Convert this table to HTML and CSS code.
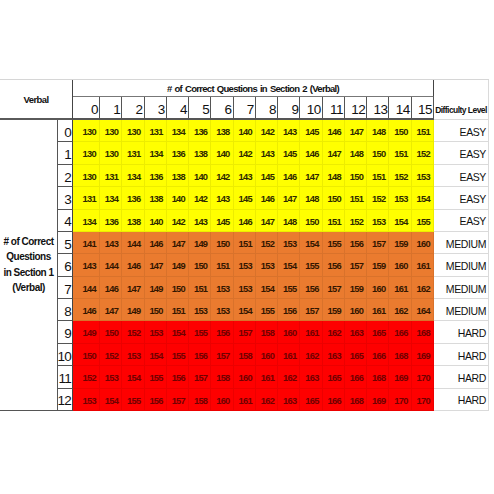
FILE: index.html
```html
<!DOCTYPE html>
<html>
<head>
<meta charset="utf-8">
<link rel="stylesheet" href="styles.css">
</head>
<body>
<div class="sheet">
  <div class="corner">Verbal</div>
  <div class="title"># of Correct Questions in Section 2 (Verbal)</div>
  <div class="dhead">Difficulty Level</div>
  <div class="cn">0</div><div class="cn">1</div><div class="cn">2</div><div class="cn">3</div><div class="cn">4</div><div class="cn">5</div><div class="cn">6</div><div class="cn">7</div><div class="cn">8</div><div class="cn">9</div><div class="cn">10</div><div class="cn">11</div><div class="cn">12</div><div class="cn">13</div><div class="cn">14</div><div class="cn">15</div>
  <div class="side"># of Correct<br>Questions<br>in Section 1<br>(Verbal)</div>

  <div class="rn">0</div>
  <div class="c y">130</div><div class="c y">130</div><div class="c y">130</div><div class="c y">131</div><div class="c y">134</div><div class="c y">136</div><div class="c y">138</div><div class="c y">140</div><div class="c y">142</div><div class="c y">143</div><div class="c y">145</div><div class="c y">146</div><div class="c y">147</div><div class="c y">148</div><div class="c y">150</div><div class="c y">151</div>
  <div class="d">EASY</div>

  <div class="rn">1</div>
  <div class="c y">130</div><div class="c y">130</div><div class="c y">131</div><div class="c y">134</div><div class="c y">136</div><div class="c y">138</div><div class="c y">140</div><div class="c y">142</div><div class="c y">143</div><div class="c y">145</div><div class="c y">146</div><div class="c y">147</div><div class="c y">148</div><div class="c y">150</div><div class="c y">151</div><div class="c y">152</div>
  <div class="d">EASY</div>

  <div class="rn">2</div>
  <div class="c y">130</div><div class="c y">131</div><div class="c y">134</div><div class="c y">136</div><div class="c y">138</div><div class="c y">140</div><div class="c y">142</div><div class="c y">143</div><div class="c y">145</div><div class="c y">146</div><div class="c y">147</div><div class="c y">148</div><div class="c y">150</div><div class="c y">151</div><div class="c y">152</div><div class="c y">153</div>
  <div class="d">EASY</div>

  <div class="rn">3</div>
  <div class="c y">131</div><div class="c y">134</div><div class="c y">136</div><div class="c y">138</div><div class="c y">140</div><div class="c y">142</div><div class="c y">143</div><div class="c y">145</div><div class="c y">146</div><div class="c y">147</div><div class="c y">148</div><div class="c y">150</div><div class="c y">151</div><div class="c y">152</div><div class="c y">153</div><div class="c y">154</div>
  <div class="d">EASY</div>

  <div class="rn">4</div>
  <div class="c y">134</div><div class="c y">136</div><div class="c y">138</div><div class="c y">140</div><div class="c y">142</div><div class="c y">143</div><div class="c y">145</div><div class="c y">146</div><div class="c y">147</div><div class="c y">148</div><div class="c y">150</div><div class="c y">151</div><div class="c y">152</div><div class="c y">153</div><div class="c y">154</div><div class="c y">155</div>
  <div class="d">EASY</div>

  <div class="rn">5</div>
  <div class="c o">141</div><div class="c o">143</div><div class="c o">144</div><div class="c o">146</div><div class="c o">147</div><div class="c o">149</div><div class="c o">150</div><div class="c o">151</div><div class="c o">152</div><div class="c o">153</div><div class="c o">154</div><div class="c o">155</div><div class="c o">156</div><div class="c o">157</div><div class="c o">159</div><div class="c o">160</div>
  <div class="d">MEDIUM</div>

  <div class="rn">6</div>
  <div class="c o">143</div><div class="c o">144</div><div class="c o">146</div><div class="c o">147</div><div class="c o">149</div><div class="c o">150</div><div class="c o">151</div><div class="c o">153</div><div class="c o">153</div><div class="c o">154</div><div class="c o">155</div><div class="c o">156</div><div class="c o">157</div><div class="c o">159</div><div class="c o">160</div><div class="c o">161</div>
  <div class="d">MEDIUM</div>

  <div class="rn">7</div>
  <div class="c o">144</div><div class="c o">146</div><div class="c o">147</div><div class="c o">149</div><div class="c o">150</div><div class="c o">151</div><div class="c o">153</div><div class="c o">153</div><div class="c o">154</div><div class="c o">155</div><div class="c o">156</div><div class="c o">157</div><div class="c o">159</div><div class="c o">160</div><div class="c o">161</div><div class="c o">162</div>
  <div class="d">MEDIUM</div>

  <div class="rn">8</div>
  <div class="c o">146</div><div class="c o">147</div><div class="c o">149</div><div class="c o">150</div><div class="c o">151</div><div class="c o">153</div><div class="c o">153</div><div class="c o">154</div><div class="c o">155</div><div class="c o">156</div><div class="c o">157</div><div class="c o">159</div><div class="c o">160</div><div class="c o">161</div><div class="c o">162</div><div class="c o">164</div>
  <div class="d">MEDIUM</div>

  <div class="rn">9</div>
  <div class="c r">149</div><div class="c r">150</div><div class="c r">152</div><div class="c r">153</div><div class="c r">154</div><div class="c r">155</div><div class="c r">156</div><div class="c r">157</div><div class="c r">158</div><div class="c r">160</div><div class="c r">161</div><div class="c r">162</div><div class="c r">163</div><div class="c r">165</div><div class="c r">166</div><div class="c r">168</div>
  <div class="d">HARD</div>

  <div class="rn">10</div>
  <div class="c r">150</div><div class="c r">152</div><div class="c r">153</div><div class="c r">154</div><div class="c r">155</div><div class="c r">156</div><div class="c r">157</div><div class="c r">158</div><div class="c r">160</div><div class="c r">161</div><div class="c r">162</div><div class="c r">163</div><div class="c r">165</div><div class="c r">166</div><div class="c r">168</div><div class="c r">169</div>
  <div class="d">HARD</div>

  <div class="rn">11</div>
  <div class="c r">152</div><div class="c r">153</div><div class="c r">154</div><div class="c r">155</div><div class="c r">156</div><div class="c r">157</div><div class="c r">158</div><div class="c r">160</div><div class="c r">161</div><div class="c r">162</div><div class="c r">163</div><div class="c r">165</div><div class="c r">166</div><div class="c r">168</div><div class="c r">169</div><div class="c r">170</div>
  <div class="d">HARD</div>

  <div class="rn">12</div>
  <div class="c r">153</div><div class="c r">154</div><div class="c r">155</div><div class="c r">156</div><div class="c r">157</div><div class="c r">158</div><div class="c r">160</div><div class="c r">161</div><div class="c r">162</div><div class="c r">163</div><div class="c r">165</div><div class="c r">166</div><div class="c r">168</div><div class="c r">169</div><div class="c r">170</div><div class="c r">170</div>
  <div class="d">HARD</div>
</div>
</body>
</html>
```

FILE: styles.css
```css
* {
  box-sizing: border-box;
  margin: 0;
  padding: 0;
}

body {
  background: #ffffff;
  font-family: "Liberation Sans", Arial, sans-serif;
  color: #111111;
}

.sheet {
  display: grid;
  grid-template-columns: 57px 16px 27px repeat(15, 22.27px) 55px;
  grid-template-rows: 17px 23px repeat(13, 22.385px);
  width: 489px;
  margin-top: 79px;
  border-top: 1px solid #d6d6d6;
}

.corner {
  grid-column: 1 / 3;
  grid-row: 1 / 3;
  display: flex;
  align-items: center;
  justify-content: center;
  font-weight: bold;
  font-size: 9.5px;
  letter-spacing: -0.6px;
  border-bottom: 2px solid #5a5a5a;
  border-right: 1px solid #444444;
}

.title {
  grid-column: 3 / 19;
  grid-row: 1;
  display: flex;
  align-items: center;
  justify-content: center;
  font-weight: bold;
  font-size: 9.5px;
  letter-spacing: -0.7px;
  word-spacing: 1px;
  white-space: nowrap;
  border-bottom: 1px solid #777777;
  border-right: 1px solid #444444;
}

.dhead {
  grid-column: 19;
  grid-row: 1 / 3;
  display: flex;
  align-items: flex-end;
  justify-content: center;
  font-weight: bold;
  font-size: 8.5px;
  letter-spacing: -0.55px;
  padding-bottom: 4px;
  white-space: nowrap;
  border-bottom: 1px solid #dadada;
  border-right: 1px solid #dadada;
}

.cn {
  display: flex;
  align-items: flex-end;
  justify-content: flex-end;
  font-size: 13.5px;
  letter-spacing: -0.5px;
  line-height: 1;
  padding: 0 1px 2px 0;
  border-right: 1px solid #555555;
  border-bottom: 2px solid #555555;
}

.side {
  grid-column: 1;
  grid-row: 3 / 16;
  display: flex;
  align-items: center;
  justify-content: center;
  text-align: center;
  font-weight: bold;
  font-size: 10px;
  letter-spacing: -0.5px;
  line-height: 15.5px;
  white-space: nowrap;
  border-bottom: 1px solid #555555;
}

.rn {
  display: flex;
  align-items: flex-end;
  justify-content: flex-end;
  font-size: 13.5px;
  letter-spacing: -0.8px;
  line-height: 1;
  padding: 0 1px 2px 0;
  border-left: 1px solid #555555;
  border-right: 1px solid #444444;
  border-bottom: 1px solid #555555;
}

.c {
  display: flex;
  align-items: flex-end;
  justify-content: flex-end;
  font-weight: bold;
  font-size: 9.3px;
  letter-spacing: -0.7px;
  line-height: 1;
  padding: 0 3px 4px 0;
  border-right: 1px solid rgba(0, 0, 0, 0.07);
  border-bottom: 1px solid rgba(0, 0, 0, 0.07);
}

.y {
  background: #ffff00;
  color: #2e2900;
}

.o {
  background: #ea7b2f;
  color: #331600;
}

.r {
  background: #fe0000;
  color: #700000;
}

.d {
  display: flex;
  align-items: flex-end;
  justify-content: flex-end;
  font-size: 10.5px;
  letter-spacing: -0.4px;
  line-height: 1;
  padding: 0 2px 4px 0;
  border-right: 1px solid #dadada;
  border-bottom: 1px solid #dadada;
}
```
